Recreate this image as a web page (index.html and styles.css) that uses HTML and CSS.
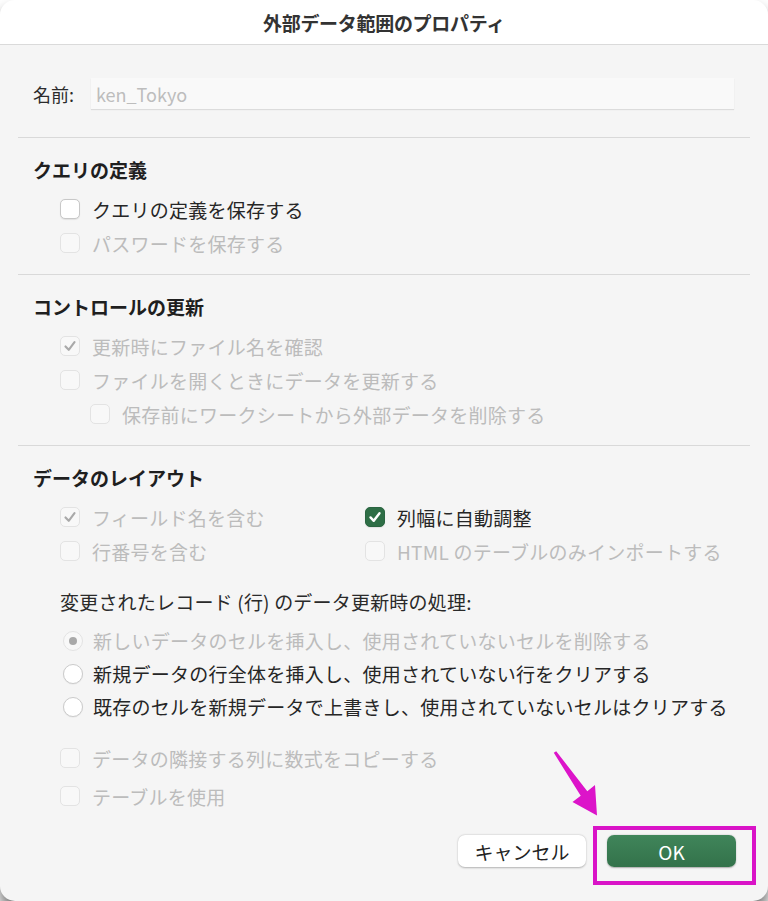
FILE: index.html
```html
<!DOCTYPE html>
<html lang="ja">
<head>
<meta charset="utf-8">
<title>外部データ範囲のプロパティ</title>
<link rel="stylesheet" href="styles.css">
</head>
<body>
<div class="dialog">
  <div class="titlebar">外部データ範囲のプロパティ</div>
  <div class="content">
    <div class="name-row">
      <span class="name-label">名前:</span>
      <div class="name-input">ken_Tokyo</div>
    </div>

    <div class="sep"></div>

    <section class="group">
      <h2 class="group-title">クエリの定義</h2>
      <div class="opts">
        <div class="opt"><span class="cb"></span><span>クエリの定義を保存する</span></div>
        <div class="opt is-disabled"><span class="cb"></span><span>パスワードを保存する</span></div>
      </div>
    </section>

    <div class="sep"></div>

    <section class="group">
      <h2 class="group-title">コントロールの更新</h2>
      <div class="opts">
        <div class="opt is-disabled"><span class="cb"><svg viewBox="0 0 20 20" class="mark"><path d="M5 10.5 L8.6 14.2 L15 5.8"/></svg></span><span>更新時にファイル名を確認</span></div>
        <div class="opt is-disabled"><span class="cb"></span><span>ファイルを開くときにデータを更新する</span></div>
        <div class="opt is-disabled opt-indent"><span class="cb"></span><span>保存前にワークシートから外部データを削除する</span></div>
      </div>
    </section>

    <div class="sep"></div>

    <section class="group group-last">
      <h2 class="group-title">データのレイアウト</h2>
      <div class="opts opts-grid">
        <div class="opt is-disabled"><span class="cb"><svg viewBox="0 0 20 20" class="mark"><path d="M5 10.5 L8.6 14.2 L15 5.8"/></svg></span><span>フィールド名を含む</span></div>
        <div class="opt"><span class="cb cb-on"><svg viewBox="0 0 20 20" class="mark"><path d="M5 10.5 L8.6 14.2 L15 5.8"/></svg></span><span>列幅に自動調整</span></div>
        <div class="opt is-disabled"><span class="cb"></span><span>行番号を含む</span></div>
        <div class="opt is-disabled"><span class="cb"></span><span>HTML のテーブルのみインポートする</span></div>
      </div>

      <div class="sub-label">変更されたレコード (行) のデータ更新時の処理:</div>
      <div class="radios">
        <div class="opt radio-opt is-disabled"><span class="rb rb-on"></span><span>新しいデータのセルを挿入し、使用されていないセルを削除する</span></div>
        <div class="opt radio-opt"><span class="rb"></span><span>新規データの行全体を挿入し、使用されていない行をクリアする</span></div>
        <div class="opt radio-opt"><span class="rb"></span><span>既存のセルを新規データで上書きし、使用されていないセルはクリアする</span></div>
      </div>

      <div class="opts opts-tall">
        <div class="opt is-disabled"><span class="cb"></span><span>データの隣接する列に数式をコピーする</span></div>
        <div class="opt is-disabled"><span class="cb"></span><span>テーブルを使用</span></div>
      </div>
    </section>

    <div class="buttons">
      <div class="btn btn-cancel">キャンセル</div>
      <div class="btn btn-ok">OK</div>
    </div>
  </div>

  <svg class="annot" viewBox="0 0 768 901" width="768" height="901">
    <polygon points="556.2,751.2 587.3,791.3 595,785 597,815.5 572.5,802 580.7,795.7 553.8,752.8" fill="#dc14c9"/>
  </svg>
  <div class="highlight"></div>
</div>
</body>
</html>
```

FILE: styles.css
```css
html, body {
  margin: 0;
  padding: 0;
  background: #ffffff;
}

body {
  font-family: "Noto Sans CJK JP", "Noto Sans", sans-serif;
  color: #262626;
}

.dialog {
  position: relative;
  width: 768px;
  height: 901px;
  box-sizing: border-box;
  background: #f5f5f5;
  border-radius: 15px;
  overflow: hidden;
  box-shadow: 0 10px 14px rgba(0, 0, 0, 0.55);
}

.titlebar {
  height: 44px;
  background: #ffffff;
  border-bottom: 1px solid #dadada;
  display: flex;
  align-items: center;
  justify-content: center;
  font-size: 19px;
  font-weight: 700;
  color: #333333;
  letter-spacing: -0.3px;
}

.content {
  padding: 0 18px;
}

.name-row {
  display: flex;
  align-items: center;
  padding: 33px 16px 0 15px;
}

.name-label {
  width: 58px;
  font-size: 18px;
  color: #2b2b2b;
}

.name-input {
  flex: 1;
  height: 31px;
  box-sizing: border-box;
  padding-left: 5px;
  display: flex;
  align-items: center;
  background: #f9f9f9;
  box-shadow: 0 1px 1px rgba(0, 0, 0, 0.1);
  font-size: 18px;
  color: #bdbdbd;
}

.sep {
  height: 1px;
  background: #d9d9d9;
  margin-top: 28px;
}

.group + .sep {
  margin-top: 14px;
}

.group {
  padding-top: 19px;
}

.group-title {
  margin: 0 0 9px 15px;
  font-size: 19px;
  line-height: 26px;
  font-weight: 700;
  color: #1f1f1f;
}

.opts {
  margin-left: 42px;
}

.opt {
  height: 34px;
  display: flex;
  align-items: center;
  gap: 12px;
  font-size: 19px;
  letter-spacing: 0.25px;
  color: #262626;
  white-space: nowrap;
}

.opt.is-disabled {
  color: #bcbcbc;
}

.opt-indent {
  margin-left: 30px;
}

.opts-grid {
  display: grid;
  grid-template-columns: 305px 1fr;
}

.cb {
  flex: none;
  width: 20px;
  height: 20px;
  box-sizing: border-box;
  border: 1px solid #c8c8c8;
  border-radius: 5px;
  background: #ffffff;
  box-shadow: 0 0.5px 1px rgba(0, 0, 0, 0.08);
  display: flex;
  align-items: center;
  justify-content: center;
}

.is-disabled .cb {
  border-color: #e3e3e3;
  background: #f8f8f8;
  box-shadow: none;
}

.mark {
  width: 20px;
  height: 20px;
  fill: none;
  stroke: #a9a9a9;
  stroke-width: 2.4;
  stroke-linecap: round;
  stroke-linejoin: round;
}

.cb-on {
  background: #2e6e46;
  border-color: #2a6541;
}

.cb-on .mark {
  stroke: #ffffff;
  stroke-width: 2.7;
}

.sub-label {
  margin: 17px 0 0 42px;
  line-height: 34px;
  font-size: 19px;
  letter-spacing: 0.2px;
  color: #2a2a2a;
}

.radios {
  margin: 5px 0 0 45px;
}

.radio-opt {
  height: 33px;
  gap: 10px;
}

.rb {
  flex: none;
  width: 20px;
  height: 20px;
  box-sizing: border-box;
  border: 1px solid #cbcbcb;
  border-radius: 50%;
  background: #ffffff;
  box-shadow: 0 0.5px 1px rgba(0, 0, 0, 0.08);
  display: flex;
  align-items: center;
  justify-content: center;
}

.is-disabled .rb {
  border-color: #e3e3e3;
  background: #f8f8f8;
  box-shadow: none;
}

.rb-on::after {
  content: "";
  width: 8px;
  height: 8px;
  border-radius: 50%;
  background: #a9a9a9;
}

.opts-tall {
  margin-top: 16px;
}

.opts-tall .opt {
  height: 38px;
}

.buttons {
  display: flex;
  justify-content: flex-end;
  gap: 21px;
  margin: 20px 14px 0 0;
}

.btn {
  height: 32px;
  border-radius: 7px;
  display: flex;
  align-items: center;
  justify-content: center;
  font-size: 19px;
}

.btn-cancel {
  width: 128px;
  background: #ffffff;
  color: #222222;
  box-shadow: 0 0.5px 2px rgba(0, 0, 0, 0.28);
}

.btn-ok {
  width: 129px;
  background: linear-gradient(#40855a, #33724a);
  color: #ffffff;
  font-weight: 400;
  box-shadow: 0 0.5px 1.5px rgba(0, 0, 0, 0.3);
}

.annot {
  position: absolute;
  left: 0;
  top: 0;
  pointer-events: none;
}

.highlight {
  position: absolute;
  left: 593px;
  top: 826px;
  width: 163px;
  height: 59px;
  box-sizing: border-box;
  border: 4px solid #d914c7;
  pointer-events: none;
}
```
